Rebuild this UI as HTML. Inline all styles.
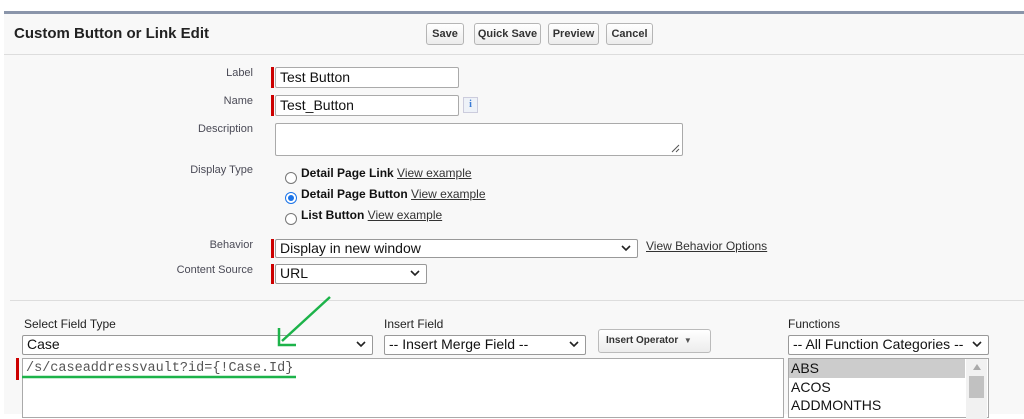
<!DOCTYPE html>
<html><head><meta charset="utf-8"><style>
*{box-sizing:border-box;margin:0;padding:0}
body{width:1024px;height:414px;overflow:hidden;background:#fff;font-family:"Liberation Sans",sans-serif;position:relative}
.a{position:absolute}
.panel{left:4px;top:11px;width:1020px;height:403px;background:#f8f8f8;border-top:3px solid #8a95aa}
.lbl{font-size:11px;color:#4a4a56;text-align:right;width:180px;left:73px}
.btn{top:23px;height:22px;border:1px solid #b5b5b5;border-radius:3px;background:linear-gradient(#fff,#ececec);font-size:11px;font-weight:bold;color:#333;text-align:center;line-height:20px}
.in{background:#fff;border:1px solid #aaa;font-size:14px;color:#111;padding-left:4px;border-radius:2px}
.rb{background:#c00;width:3px}
.sel{background:#fff;border:1px solid #999;font-size:14px;color:#111;padding-left:4px;border-radius:2px}
.sel svg{position:absolute;right:6px;top:5px}
.rad{width:12px;height:12px;border:1px solid #777;border-radius:50%;background:#fff}
.rt{font-size:12px;color:#111}
.rt b{font-weight:bold}
.rt u{color:#333}
.sm{font-size:12px;color:#222}
</style></head><body>
<div class="a panel"></div>
<div class="a" style="left:4px;top:54px;width:1020px;height:1px;background:#ddd"></div>
<div class="a" style="left:14px;top:25px;font-size:15px;font-weight:bold;color:#222">Custom Button or Link Edit</div>
<div class="a btn" style="left:426px;width:38px">Save</div>
<div class="a btn" style="left:474px;width:67px">Quick Save</div>
<div class="a btn" style="left:548px;width:51px">Preview</div>
<div class="a btn" style="left:606px;width:47px">Cancel</div>

<div class="a lbl" style="top:67px">Label</div>
<div class="a rb" style="left:271px;top:67px;height:21px"></div>
<div class="a in" style="left:275px;top:67px;width:184px;height:21px;line-height:18px">Test Button</div>
<div class="a lbl" style="top:95px">Name</div>
<div class="a rb" style="left:271px;top:95px;height:21px"></div>
<div class="a in" style="left:275px;top:95px;width:184px;height:21px;line-height:18px">Test_Button</div>
<div class="a" style="left:463px;top:97px;width:15px;height:16px;border:1px solid #ccd;background:#eef2f8;color:#3a7bd5;font-size:10px;font-weight:bold;text-align:center;line-height:14px;font-family:'Liberation Serif',serif">i</div>
<div class="a lbl" style="top:123px">Description</div>
<div class="a in" style="left:275px;top:123px;width:408px;height:33px"><svg class="a" style="right:2px;bottom:2px" width="9" height="9"><path d="M8 1L1 8M8 5L5 8" stroke="#555" stroke-width="1"/></svg></div>
<div class="a lbl" style="top:164px">Display Type</div>
<div class="a rad" style="left:285px;top:172px"></div>
<div class="a rt" style="left:301px;top:166px"><b>Detail Page Link</b> <u>View example</u></div>
<div class="a rad" style="left:285px;top:192px;border-color:#1a73e8"><div style="width:6px;height:6px;border-radius:50%;background:#1a73e8;margin:2px"></div></div>
<div class="a rt" style="left:301px;top:187px"><b>Detail Page Button</b> <u>View example</u></div>
<div class="a rad" style="left:285px;top:213px"></div>
<div class="a rt" style="left:301px;top:208px"><b>List Button</b> <u>View example</u></div>

<div class="a lbl" style="top:239px">Behavior</div>
<div class="a rb" style="left:271px;top:239px;height:19px"></div>
<div class="a sel" style="left:275px;top:239px;width:363px;height:19px;line-height:16px">Display in new window<svg width="10" height="7"><path d="M1 1l4 4 4-4" stroke="#222" stroke-width="1.6" fill="none"/></svg></div>
<div class="a rt" style="left:646px;top:239px"><u>View Behavior Options</u></div>
<div class="a lbl" style="top:264px">Content Source</div>
<div class="a rb" style="left:271px;top:264px;height:20px"></div>
<div class="a sel" style="left:275px;top:264px;width:152px;height:20px;line-height:17px">URL<svg width="10" height="7"><path d="M1 1l4 4 4-4" stroke="#222" stroke-width="1.6" fill="none"/></svg></div>

<div class="a" style="left:10px;top:300px;width:1014px;height:1px;background:#ddd"></div>
<div class="a sm" style="left:24px;top:317px">Select Field Type</div>
<div class="a sel" style="left:22px;top:335px;width:351px;height:20px;line-height:17px">Case<svg width="10" height="7"><path d="M1 1l4 4 4-4" stroke="#222" stroke-width="1.6" fill="none"/></svg></div>
<div class="a sm" style="left:384px;top:317px">Insert Field</div>
<div class="a sel" style="left:384px;top:335px;width:202px;height:20px;line-height:17px">-- Insert Merge Field --<svg width="10" height="7"><path d="M1 1l4 4 4-4" stroke="#222" stroke-width="1.6" fill="none"/></svg></div>
<div class="a" style="left:598px;top:329px;width:113px;height:24px;border:1px solid #bbb;border-radius:3px;background:linear-gradient(#fff,#ececec);font-size:10px;font-weight:bold;color:#333;line-height:21px;padding-left:7px">Insert Operator &nbsp;<span style="font-size:8px;color:#555">▼</span></div>
<div class="a sm" style="left:788px;top:317px">Functions</div>
<div class="a sel" style="left:788px;top:335px;width:201px;height:20px;line-height:17px;white-space:nowrap;overflow:hidden">-- All Function Categories --<svg width="10" height="7" style="background:#fff"><path d="M1 1l4 4 4-4" stroke="#222" stroke-width="1.6" fill="none"/></svg></div>

<div class="a rb" style="left:16px;top:358px;height:22px"></div>
<div class="a" style="left:22px;top:358px;width:762px;height:60px;background:#fff;border:1px solid #aaa"></div>
<div class="a" style="left:26px;top:361px;font-family:'Liberation Mono',monospace;font-size:13.5px;color:#555">/s/caseaddressvault?id={!Case.Id}</div>
<div class="a" style="left:788px;top:358px;width:201px;height:60px;background:#fff;border:1px solid #aaa;font-size:14px;color:#111">
<div style="background:#ccc;padding-left:2px;height:19px;line-height:19px;width:176px">ABS</div>
<div style="padding-left:2px;height:18px;line-height:18px">ACOS</div>
<div style="padding-left:2px;height:18px;line-height:18px">ADDMONTHS</div>
<div class="a" style="left:177px;top:0;width:21px;height:60px;background:#f1f1f1"><div style="margin:5px auto 0;width:0;height:0;border:4px solid transparent;border-bottom:6px solid #aaa;border-top:0"></div><div style="margin:6px 3px 0;height:22px;background:#c1c1c1"></div></div>
</div>

<svg class="a" style="left:0;top:0" width="1024" height="414">
<path d="M22 377H296" stroke="#1db34a" stroke-width="2.5"/>
<path d="M330 297L282 341" stroke="#1db34a" stroke-width="2.5"/>
<path d="M279 328L279 345L296 345" stroke="#1db34a" stroke-width="2.5" fill="none"/>
</svg>
</body></html>
